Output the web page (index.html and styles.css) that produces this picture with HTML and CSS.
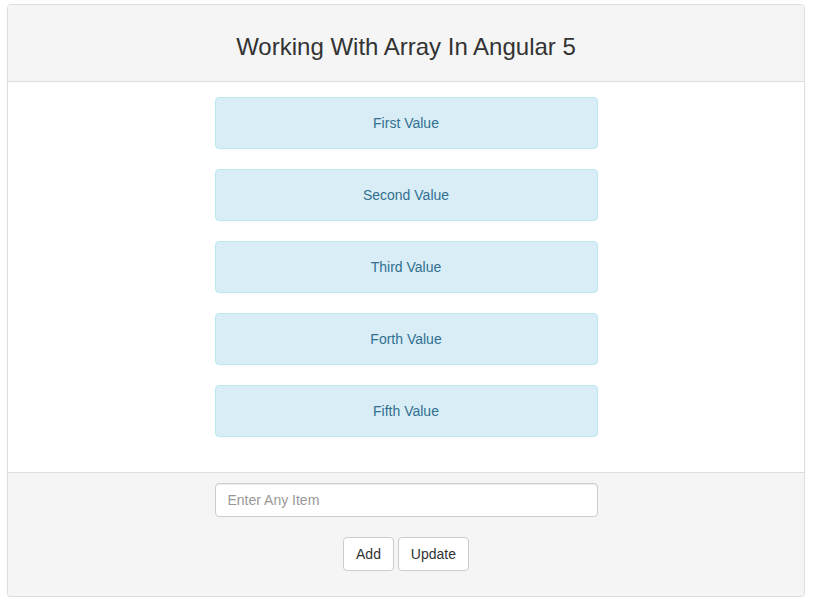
FILE: index.html
```html
<!DOCTYPE html>
<html lang="en">
<head>
    <meta charset="UTF-8">
    <meta name="viewport" content="width=device-width, initial-scale=1.0">
    <title>Working With Array In Angular 5</title>
    <link rel="stylesheet" href="styles.css">
</head>
<body>
    <div class="panel">
        <div class="panel-heading">
            <h3 class="panel-title">Working With Array In Angular 5</h3>
        </div>
        <div class="panel-body">
            <div class="col">
                <div class="alert">First Value</div>
                <div class="alert">Second Value</div>
                <div class="alert">Third Value</div>
                <div class="alert">Forth Value</div>
                <div class="alert">Fifth Value</div>
            </div>
        </div>
        <div class="panel-footer">
            <div class="col">
                <input type="text" class="form-control" placeholder="Enter Any Item">
                <div class="btn-row">
                    <button class="btn">Add</button>
                    <button class="btn">Update</button>
                </div>
            </div>
        </div>
    </div>
</body>
</html>
```

FILE: styles.css
```css
body {
    font-family: "Liberation Sans", Arial, sans-serif;
    font-size: 14px;
    line-height: 1.42857;
    color: #333;
    margin: 0;
    padding: 0;
    background-color: #fff;
}

.panel {
    margin: 4px 8px 0 7px;
    border: 1px solid #ddd;
    border-radius: 4px;
    background-color: #fff;
    box-shadow: 0 1px 1px rgba(0, 0, 0, 0.05);
}

.panel-heading {
    background-color: #f5f5f5;
    border-bottom: 1px solid #ddd;
    border-radius: 3px 3px 0 0;
    padding: 29px 15px 21px;
    text-align: center;
}

.panel-title {
    margin: 0;
    font-size: 24px;
    font-weight: normal;
    line-height: 1.1;
    color: #333;
}

.panel-body {
    padding: 15px;
}

.col {
    width: 383px;
    margin: 0 auto;
}

.alert {
    padding: 16px 15px 14px;
    margin-bottom: 20px;
    border: 1px solid #bce8f1;
    border-radius: 4px;
    background-color: #d9edf7;
    color: #31708f;
    text-align: center;
}

.panel-footer {
    background-color: #f5f5f5;
    border-top: 1px solid #ddd;
    border-radius: 0 0 3px 3px;
    padding: 10px 15px 25px;
}

.form-control {
    display: block;
    box-sizing: border-box;
    width: 100%;
    height: 34px;
    padding: 6px 12px;
    font-family: inherit;
    font-size: 14px;
    color: #555;
    background-color: #fff;
    border: 1px solid #ccc;
    border-radius: 4px;
    box-shadow: inset 0 1px 1px rgba(0, 0, 0, 0.075);
    outline: none;
}

.form-control::placeholder {
    color: #999;
}

.btn-row {
    margin-top: 20px;
    text-align: center;
}

.btn {
    display: inline-block;
    box-sizing: border-box;
    height: 34px;
    padding: 7px 12px 5px;
    font-family: inherit;
    font-size: 14px;
    line-height: 1.42857;
    color: #333;
    background-color: #fff;
    border: 1px solid #ccc;
    border-radius: 4px;
    cursor: pointer;
}
```
